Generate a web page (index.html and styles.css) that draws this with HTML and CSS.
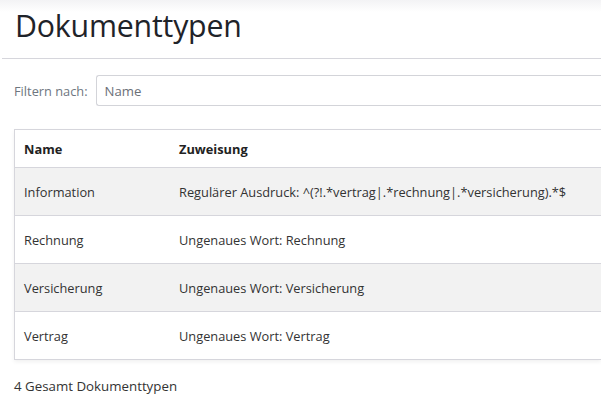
FILE: index.html
```html
<!DOCTYPE html>
<html lang="de">
<head>
<meta charset="utf-8">
<title>Dokumenttypen</title>
<link rel="stylesheet" href="styles.css">
</head>
<body>
<div class="topshade"></div>
<header class="page-header">
  <h1 class="title">Dokumenttypen</h1>
</header>
<div class="filter">
  <label class="filter-label" for="f">Filtern nach:</label>
  <input id="f" class="filter-input" type="text" placeholder="Name">
</div>
<div class="card">
  <table class="grid">
    <thead>
      <tr><th class="c1">Name</th><th>Zuweisung</th></tr>
    </thead>
    <tbody>
      <tr class="alt"><td class="c1">Information</td><td>Regulärer Ausdruck: ^(?!.*vertrag|.*rechnung|.*versicherung).*$</td></tr>
      <tr><td class="c1">Rechnung</td><td>Ungenaues Wort: Rechnung</td></tr>
      <tr class="alt"><td class="c1">Versicherung</td><td>Ungenaues Wort: Versicherung</td></tr>
      <tr><td class="c1">Vertrag</td><td>Ungenaues Wort: Vertrag</td></tr>
    </tbody>
  </table>
</div>
<p class="total">4 Gesamt Dokumenttypen</p>
</body>
</html>
```
FILE: styles.css
```css
html, body {
  margin: 0;
  padding: 0;
  background: #fff;
  overflow: hidden;
}
body {
  font-family: "Open Sans", "Noto Sans", sans-serif;
  color: #333;
  width: 601px;
  height: 411px;
  position: relative;
}
.topshade {
  position: absolute;
  left: 0; top: 0; right: 0;
  height: 12px;
  background: linear-gradient(#f3f3f5, rgba(255,255,255,0));
}
.page-header {
  margin-left: 2px;
  border-bottom: 1px solid #d6d6dc;
  height: 59px;
  box-sizing: border-box;
  padding-left: 13px;
  position: relative;
}
.title {
  margin: 0;
  padding-top: 6px;
  font-size: 30.3px;
  font-weight: 400;
  color: #1f2329;
  line-height: 40px;
  letter-spacing: -0.2px;
}
.filter {
  display: flex;
  align-items: center;
  margin-top: 16px;
  padding-left: 14px;
}
.filter-label {
  font-size: 12.8px;
  color: #6e7680;
  margin-right: 8px;
}
.filter-input {
  flex: 1;
  height: 31px;
  box-sizing: border-box;
  border: 1px solid #d3d4d9;
  border-right: none;
  border-radius: 3px 0 0 3px;
  padding: 0 8px;
  font-family: inherit;
  font-size: 13.2px;
  color: #333;
  outline: none;
}
.filter-input::placeholder {
  color: #6b7078;
}
.card {
  margin-top: 23px;
  margin-left: 14px;
  border: 1px solid #d6d6dc;
  border-right: none;
  box-shadow: 0 2px 4px rgba(0,0,0,0.06);
}
.grid {
  width: 100%;
  border-collapse: collapse;
  font-size: 12.8px;
}
.grid th, .grid td {
  text-align: left;
  padding: 0 9px;
  white-space: nowrap;
}
.grid th {
  height: 37px;
  font-weight: 700;
  color: #222;
  border-bottom: 1px solid #d6d6dc;
}
.grid td {
  height: 47px;
  color: #333;
  border-bottom: 1px solid #d6d6dc;
}
.grid tbody tr:last-child td {
  border-bottom: none;
}
.grid .c1 {
  width: 137px;
}
.grid tr.alt td {
  background: #f2f2f2;
}
.total {
  margin: 17px 0 0 14px;
  font-size: 13.3px;
  color: #333;
}
```
